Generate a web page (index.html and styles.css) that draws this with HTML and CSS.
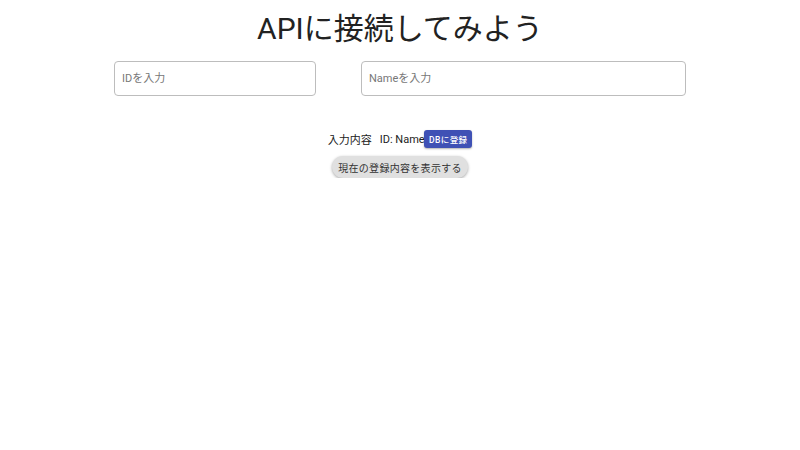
FILE: index.html
```html
<!DOCTYPE html>
<html>
<head>
    <title>APIに接続してみよう</title>
    <link rel="stylesheet" href="styles.css">
</head>
<body>
    <h1>APIに接続してみよう</h1>
    <div class="form-row">
        <input class="field field-id" type="text" placeholder="IDを入力">
        <input class="field field-name" type="text" placeholder="Nameを入力">
    </div>
    <div class="result-row">
        <span class="label">入力内容</span>
        <span class="values">ID: Name:</span>
        <button class="submit-button">DBに登録</button>
    </div>
    <div class="button-container">
        <button class="show-button">現在の登録内容を表示する</button>
    </div>
</body>
</html>
```

FILE: styles.css
```css
body {
    font-family: Roboto, "Noto Sans CJK JP", sans-serif;
    margin: 0;
    background-color: #fff;
    color: #222;
}
h1 {
    font-size: 30px;
    font-weight: 400;
    line-height: 40px;
    text-align: center;
    margin: 9px 0 12px;
}
.form-row {
    display: flex;
    justify-content: center;
    gap: 45px;
}
.field {
    box-sizing: border-box;
    height: 35px;
    border: 1px solid #bdbdbd;
    border-radius: 4px;
    padding: 0 7px;
    font-family: inherit;
    font-size: 11px;
    outline: none;
}
.field::placeholder {
    color: #777;
}
.field-id {
    width: 202px;
}
.field-name {
    width: 325px;
}
.result-row {
    display: flex;
    justify-content: center;
    align-items: center;
    margin-top: 34px;
    font-size: 11px;
}
.label {
    margin-right: 8px;
}
.submit-button {
    height: 18px;
    width: 48px;
    margin-left: -3px;
    padding: 0;
    border: none;
    border-radius: 3px;
    background-color: #3f51b5;
    color: #fff;
    font-family: inherit;
    font-size: 8.5px;
    font-weight: 500;
    letter-spacing: 0.4px;
    box-shadow: 0 1px 2px rgba(0, 0, 0, 0.3);
}
.button-container {
    display: flex;
    justify-content: center;
    margin-top: 8px;
}
.show-button {
    height: 22px;
    width: 136px;
    padding: 0;
    border: none;
    border-radius: 11px;
    background-color: #e0e0e0;
    color: #333;
    font-family: inherit;
    font-size: 10px;
    letter-spacing: 0.3px;
    box-shadow: 0 1px 3px rgba(0, 0, 0, 0.35);
}
```
